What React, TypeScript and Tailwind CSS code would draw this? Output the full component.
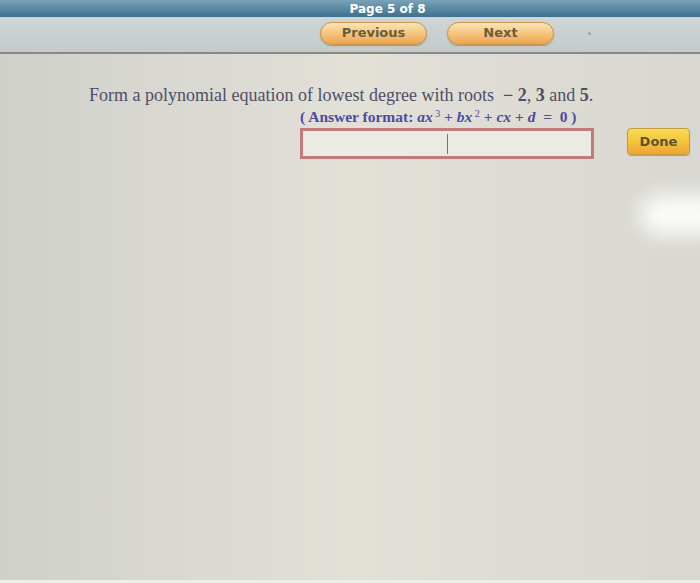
export default function App() {
  const btn =
    'h-[23px] w-[107px] rounded-full border border-[#c9944a] bg-gradient-to-b from-[#fbe3b6] via-[#f5c57d] to-[#eba451] shadow-[0_1px_1px_rgba(90,60,20,0.35)] flex items-center justify-center text-[13px] font-bold text-[#6b5d3a]';

  return (
    <div
      className="relative h-[583px] w-[700px] overflow-hidden bg-[#dedcd3]"
      style={{ fontFamily: '"DejaVu Sans", "Liberation Sans", sans-serif' }}
    >
      {/* title bar */}
      <div className="h-[17px] bg-gradient-to-b from-[#7aa3b7] via-[#5a8aa3] to-[#3f6f8c] flex items-center justify-center">
        <span className="text-[12px] font-bold text-white pl-[75px] leading-none">Page 5 of 8</span>
      </div>

      {/* toolbar */}
      <div className="h-[37px] bg-gradient-to-b from-[#cfd6d6] to-[#c3cac9] border-b-[2px] border-[#8e8680] flex items-center pl-[320px] gap-[20px] pb-[3px]">
        <div className={btn}>Previous</div>
        <div className={btn}>Next</div>
        <div className="ml-[14px] h-[3px] w-[3px] rounded-full bg-[#9aa3a3]"></div>
      </div>

      {/* body */}
      <div className="h-[526px] bg-gradient-to-r from-[#d0d0cb] via-[#e2e0d7] to-[#d8d7d1] pt-[30px]">
        <div className="flex">
          <div className="w-[612px]">
            <p
              className="pl-[89px] text-[18px] leading-[22px] text-[#4f4f66] whitespace-nowrap"
              style={{ fontFamily: '"Liberation Serif", serif' }}
            >
              Form a polynomial equation of lowest degree with roots <b>&nbsp;− 2</b>, <b>3</b> and <b>5</b>.
            </p>
            <p
              className="pl-[300px] mt-[2px] text-[15.5px] leading-[18px] font-bold text-[#4c4ca0] whitespace-nowrap"
              style={{ fontFamily: '"Liberation Serif", serif' }}
            >
              ( Answer format: <i>ax</i>
              <sup className="text-[10px] font-normal"> 3</sup> + <i>bx</i>
              <sup className="text-[10px] font-normal"> 2</sup> + <i>cx</i> + <i>d</i> &nbsp;= &nbsp;0 )
            </p>
            <div className="ml-[300px] mt-[2px] h-[31px] w-[294px] border-[3px] border-[#c27a7f] bg-[#eceae5] flex items-center pl-[144px]">
              <div className="h-[20px] w-[1px] bg-[#777]"></div>
            </div>
          </div>
          <div className="pt-[44px] pl-[15px]">
            <div className="h-[27px] w-[63px] rounded-[4px] border border-[#c99a3a] bg-gradient-to-b from-[#f7dc5a] via-[#f5c43a] to-[#eda53a] flex items-center justify-center text-[13px] font-bold text-[#5e5430] shadow-[0_1px_1px_rgba(90,60,20,0.35)]">
              Done
            </div>
          </div>
        </div>
      </div>

      {/* glare from the photo */}
      <div className="absolute left-[640px] top-[195px] h-[40px] w-[110px] rounded-full bg-white opacity-90 blur-[10px]"></div>
      <div className="absolute left-0 bottom-0 h-[3px] w-full bg-[#eeeee8]"></div>
    </div>
  );
}
